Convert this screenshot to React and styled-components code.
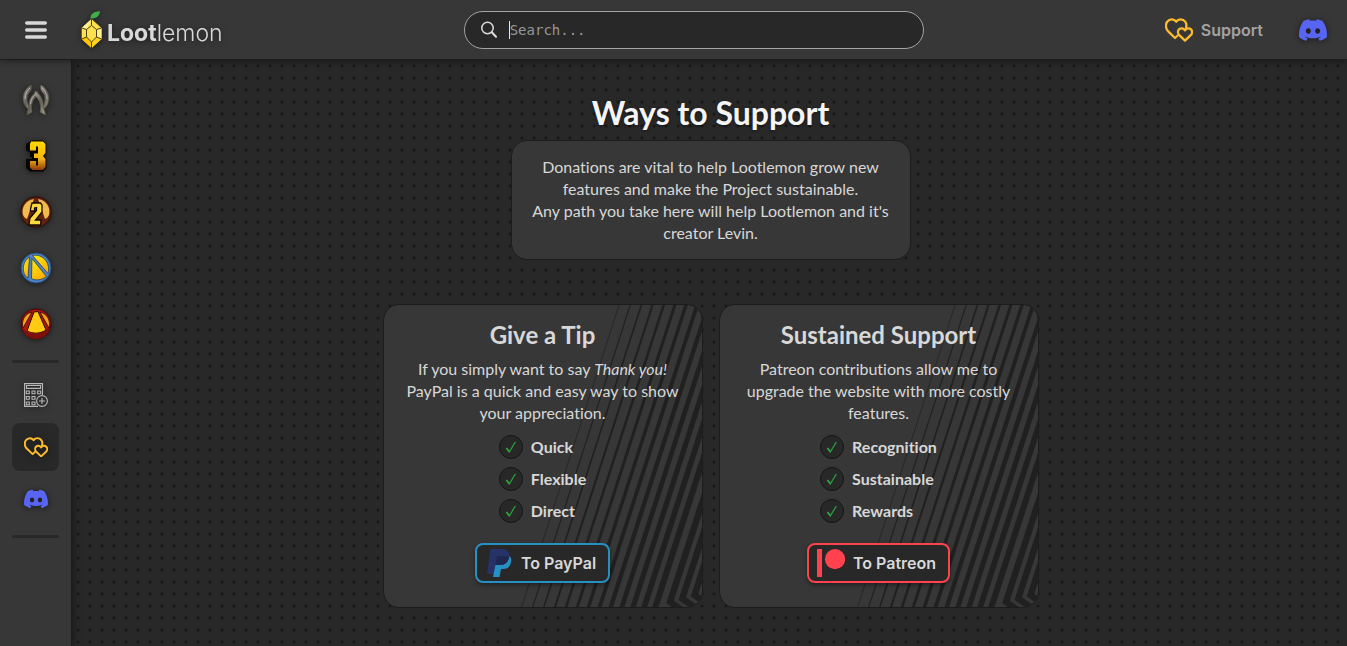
import React from "react";
import styled, { createGlobalStyle, ThemeProvider } from "styled-components";
import { SiDiscord } from "react-icons/si";

const theme = {
  bgColor: "#282828",
  panelColor: "#373737",
  lineColor: "#1c1c1c",
  textColor: "#d8d8d8",
  mutedColor: "#a3a3a3",
  yellow: "#fdbb2d",
  discord: "#5865f2",
  uiFont: `Inter, "Liberation Sans", sans-serif`,
};

const GlobalStyle = createGlobalStyle`
  * {
    box-sizing: border-box;
  }
  body {
    margin: 0;
    background-color: #282828;
    color: #d8d8d8;
    font-family: Lato, "Liberation Sans", sans-serif;
    font-size: 16px;
    font-variant-ligatures: none;
    line-height: 22px;
  }
  h1, h2, p, ul {
    margin: 0;
    padding: 0;
  }
  a {
    color: inherit;
    text-decoration: none;
  }
`;

const Page = styled.div`
  display: flex;
  flex-direction: column;
  min-height: 100vh;
`;

const Header = styled.header`
  display: flex;
  align-items: center;
  justify-content: space-between;
  height: 60px;
  padding: 0 20px 0 24px;
  background-color: ${(props) => props.theme.panelColor};
  border-bottom: 1px solid ${(props) => props.theme.lineColor};
  box-shadow: 0 0 8px rgba(0, 0, 0, 0.5);
  z-index: 2;
`;

const HeaderGroup = styled.div`
  display: flex;
  align-items: center;
  gap: ${(props) => props.$gap};
`;

const MenuButton = styled.button`
  display: flex;
  padding: 0;
  border: 0;
  background: none;
  cursor: pointer;
`;

const LogoLink = styled.a`
  display: flex;
  align-items: center;
  gap: 4px;
  filter: drop-shadow(0 1px 3px rgba(0, 0, 0, 0.5));
`;

const LogoText = styled.span`
  padding-top: 6px;
  font-family: ${(props) => props.theme.uiFont};
  font-size: 23px;
  font-weight: 300;
  line-height: 28px;
  b {
    font-weight: 700;
  }
`;

const SearchForm = styled.form`
  display: flex;
  align-items: center;
  flex: 0 1 460px;
  height: 38px;
  padding: 0 16px;
  background-color: ${(props) => props.theme.bgColor};
  border: 1px solid ${(props) => props.theme.mutedColor};
  border-radius: 19px;
`;

const Caret = styled.span`
  width: 1px;
  height: 18px;
  margin-left: 12px;
  background-color: #e8e8e8;
`;

const SearchInput = styled.input`
  flex: 1;
  min-width: 0;
  padding: 0;
  border: 0;
  outline: 0;
  background: none;
  color: ${(props) => props.theme.textColor};
  font-family: "DejaVu Sans Mono", monospace;
  font-size: 14px;
  &::placeholder {
    color: #979797;
    opacity: 1;
  }
`;

const SupportLink = styled.a`
  display: flex;
  align-items: center;
  gap: 8px;
  color: ${(props) => props.theme.mutedColor};
  font-family: ${(props) => props.theme.uiFont};
  font-weight: 600;
`;

const IconLink = styled.a`
  display: flex;
  color: ${(props) => props.theme.discord};
  filter: drop-shadow(0 1px 3px rgba(0, 0, 0, 0.5));
`;

const Body = styled.div`
  display: flex;
  flex: 1;
`;

const Sidebar = styled.nav`
  flex: none;
  width: 72px;
  padding: 16px 12px;
  background-color: ${(props) => props.theme.panelColor};
  border-right: 1px solid ${(props) => props.theme.lineColor};
  box-shadow: 0 0 8px rgba(0, 0, 0, 0.5);
`;

const SideList = styled.div`
  display: flex;
  flex-direction: column;
  gap: ${(props) => props.$gap};
`;

const SideLink = styled.a`
  display: flex;
  align-items: center;
  justify-content: center;
  height: 48px;
  border-radius: 8px;
  color: ${(props) => props.theme.discord};
  background-color: ${(props) => (props.$active ? props.theme.bgColor : "transparent")};
  svg {
    filter: drop-shadow(0 1px 3px rgba(0, 0, 0, 0.5));
  }
`;

const Divider = styled.hr`
  height: 3px;
  margin: 12px 0 8px;
  border: 0;
  border-radius: 2px;
  background-color: ${(props) => props.theme.bgColor};
`;

const Main = styled.main`
  display: flex;
  flex: 1;
  flex-direction: column;
  align-items: center;
  padding: 32px 16px 32px 18px;
  background-image: radial-gradient(circle, #191919 1px, transparent 2px);
  background-size: 12px 12px;
`;

const Title = styled.h1`
  margin-bottom: 6px;
  color: #f5f5f5;
  font-size: 32px;
  line-height: 42px;
  text-shadow: 0 1px 3px rgba(0, 0, 0, 0.5);
`;

const Intro = styled.p`
  width: 100%;
  max-width: 400px;
  margin-bottom: 44px;
  padding: 15px 20px;
  background-color: ${(props) => props.theme.panelColor};
  border: 1px solid ${(props) => props.theme.lineColor};
  border-radius: 16px;
  text-align: center;
`;

const CardRow = styled.div`
  display: flex;
  flex-wrap: wrap;
  justify-content: center;
  gap: 16px;
`;

const Card = styled.section`
  display: grid;
  width: 320px;
  overflow: hidden;
  background-color: ${(props) => props.theme.panelColor};
  border: 1px solid ${(props) => props.theme.lineColor};
  border-radius: 16px;
  > * {
    grid-area: 1 / 1;
  }
`;

const CardBody = styled.div`
  display: flex;
  flex-direction: column;
  align-items: center;
  padding: 16px 20px 24px;
  text-align: center;
`;

const CardTitle = styled.h2`
  margin-bottom: 9px;
  font-size: 24px;
  line-height: 28px;
`;

const PerkList = styled.ul`
  display: flex;
  flex-direction: column;
  gap: 8px;
  margin: 11px 0 20px;
  list-style: none;
`;

const Perk = styled.li`
  display: flex;
  align-items: center;
  gap: 8px;
  font-weight: 700;
`;

const Check = styled.span`
  display: flex;
  align-items: center;
  justify-content: center;
  width: 24px;
  height: 24px;
  background-color: ${(props) => props.theme.bgColor};
  border: 1px solid #151515;
  border-radius: 50%;
`;

const PayLink = styled.a`
  display: flex;
  align-items: center;
  gap: 8px;
  height: 40px;
  padding: 0 12px 0 8px;
  background-color: ${(props) => props.theme.bgColor};
  border: 2px solid ${(props) => props.$color};
  border-radius: 8px;
  box-shadow: 0 2px 4px rgba(0, 0, 0, 0.4);
  font-family: ${(props) => props.theme.uiFont};
  font-weight: 600;
`;

const MenuIcon = () => (
  <svg width="24" height="20" viewBox="0 0 24 20" stroke="#d8d8d8" strokeWidth="3.4" strokeLinecap="round">
    <path d="M2.7 3H21.3M2.7 10H21.3M2.7 17H21.3" />
  </svg>
);

const LemonIcon = () => (
  <svg width="22" height="38" viewBox="0 0 22 38">
    <path d="M9.5 7.5C9.5 2.5 13 .5 19 .2C18.500 5 15.500 7.600 9.500 7.500Z" fill="#3fae49" />
    <path d="M10.500 8L20.500 17V28L10.500 37L.7 28V17Z" fill="#ffe14d" />
    <path d="M10.500 8L5.500 18L.7 17Z" fill="#fff3a0" />
    <path d="M20.500 17V28L15.500 26V18Z" fill="#fff08a" />
    <path d="M.7 28L5.500 26L10.500 31V37Z" fill="#ffc400" />
    <path d="M20.500 28L15.500 26L10.500 31V37Z" fill="#ffd21f" />
    <path
      d="M10.500 14.500L15.500 18.500V26L10.500 31L5.500 26V18.500ZM10.500 8V14.500M15.500 18.500L20.500 17M15.500 26L20.500 28M10.500 31V37M5.500 26L.7 28M5.500 18.500L.7 17"
      fill="none"
      stroke="#4a4012"
      strokeWidth="1"
    />
  </svg>
);

const SearchIcon = () => (
  <svg width="16" height="18" viewBox="0 0 16 18" fill="none" stroke="#dedede" strokeLinecap="round">
    <circle cx="6.500" cy="7" r="5.700" strokeWidth="1.500" />
    <path d="M10.800 11.300L15 15.800" strokeWidth="2" />
  </svg>
);

const HeartsIcon = ({ width }) => (
  <svg width={width} height={(width * 6) / 7} viewBox="0 0 28 24" fill="none" stroke={theme.yellow} strokeWidth="2.3" strokeLinejoin="round" strokeLinecap="round">
    <path d="M12.700 17.500L10 20L3.200 13.400C.6 10.800 .2 6.500 2.200 3.800C4.600.7 8.900.5 11.200 3.700C13.400.5 18 .6 20.200 3.600C21.400 5.200 21.700 7.600 21 9.700" />
    <path d="M20 22.600L14.300 17.200C12.700 15.600 12.500 12.900 14 11.400C15.700 9.700 18.500 9.900 20 12.300C21.500 9.900 24.300 9.700 26 11.400C27.500 12.900 27.300 15.600 25.700 17.200Z" />
  </svg>
);

const CalculatorIcon = () => (
  <svg width="24" height="24" viewBox="0 0 24 24" fill="none" stroke="#b8b8b8" strokeWidth="1.100">
    <path d="M18.500 12V.6H.6V23.400H14M2.500 2.500H16.600V5.400H2.500Z" />
    <path d="M2.300 8H5.300V10.800H2.300ZM8 8H11V10.800H8ZM13.700 8H16.700V10.800H13.700ZM2.300 13.500H5.300V16.300H2.300ZM8 13.500H11V16.300H8ZM2.300 19H5.300V21.800H2.300ZM8 19H11V21.800H8Z" />
    <circle cx="18" cy="18" r="5.400" />
    <path d="M18 15V21M15 18H21" />
  </svg>
);

const HornsIcon = () => (
  <svg width="28" height="32" viewBox="0 0 28 32">
    <defs>
      <linearGradient id="steel" x1="0" y1="0" x2="1" y2="1">
        <stop offset="0" stopColor="#a39e99" />
        <stop offset=".5" stopColor="#66615f" />
        <stop offset="1" stopColor="#aaa39e" />
      </linearGradient>
    </defs>
    <g fill="url(#steel)" stroke="#5b5941" strokeWidth=".7">
      <path d="M9 1C4 4 1 9 1.200 15C1.400 19.500 3.500 23 6.500 25L5 28.500L9 27C5 20 4 14 6.200 10C7.500 8 10.500 6 9 1Z" />
      <path d="M19 1C24 4 27 9 26.800 15C26.600 19.500 24.500 23 21.500 25L23 28.500L19 27C23 20 24 14 21.800 10C20.500 8 17.500 6 19 1Z" />
      <path d="M15.500 7C9 11 6.500 17 7 22L5 31L10 28C8.500 22 10 16 15 12Z" />
      <path d="M13 7C19.500 11 21.500 17 21 22L23.500 31L18 28C19.500 22 18 16 12.500 11Z" />
    </g>
    <path d="M3 15C3.200 10 5 6 8 4M25 15C24.800 10 23 6 20 4M8.500 20C9 15 11 12 14 10" fill="none" stroke="#c4bfba" strokeWidth=".8" />
  </svg>
);

const ThreeIcon = () => (
  <svg width="22" height="32" viewBox="0 0 22 32">
    <defs>
      <linearGradient id="gold" x1="0" y1="0" x2="0" y2="1">
        <stop offset="0" stopColor="#ffd900" />
        <stop offset=".6" stopColor="#f5b414" />
        <stop offset="1" stopColor="#8d3a0c" />
      </linearGradient>
    </defs>
    <path d="M4 2L7 .5H18L21.500 4V13L19.500 16L21.500 19V28L18 31.500H5L1 28V19H7V17H5V12L1 11V4Z" fill="#080503" />
    <path d="M6 1.500H18L20.500 4V13L18 16L20.500 19V27L18 30H7.500L5 27.500V21H11V25.500H13V18H9V13.500H13V6.500H11V10.500H5V4Z" fill="url(#gold)" />
  </svg>
);

const TwoIcon = () => (
  <svg width="32" height="32" viewBox="0 0 32 32">
    <circle cx="16" cy="16" r="15.300" fill="#61230e" stroke="#2a0d07" />
    <path d="M3 19C1 11 6 4 14 3L7 23C5 22 4 21 3 19ZM18 3C26 4 31 11 29 19C28 21 27 22 25 23Z" fill="#f1bb4b" />
    <path d="M10.500 13L12 7H20.500L22 9V16L15.500 24H21L20.500 29H9L10 22L16.500 14.500V11.500L14.500 12V15H10.500Z" fill="#ffda3f" stroke="#160b04" strokeWidth="1.300" />
  </svg>
);

const PreSequelIcon = () => (
  <svg width="32" height="32" viewBox="0 0 32 32">
    <defs>
      <linearGradient id="sun" x1="0" y1="0" x2=".6" y2="1">
        <stop offset="0" stopColor="#fff000" />
        <stop offset="1" stopColor="#ffae0c" />
      </linearGradient>
    </defs>
    <circle cx="16" cy="16" r="15" fill="#4e83c5" stroke="#244f83" />
    <path d="M9.500 5C3 9 1.500 18 5.500 24L8 26Z" fill="url(#sun)" stroke="#263c50" strokeWidth=".8" />
    <path d="M12 6.500L26.500 24.500C22 28 16 29 11.500 26.500Z" fill="url(#sun)" stroke="#263c50" strokeWidth=".8" />
    <path d="M12.500 3.500C22 1.500 31 10 28 21.500Z" fill="url(#sun)" stroke="#263c50" strokeWidth=".8" />
  </svg>
);

const VaultIcon = () => (
  <svg width="32" height="32" viewBox="0 0 32 32">
    <circle cx="16" cy="16" r="15" fill="#ad1712" stroke="#420807" />
    <path d="M2 19C7 28 23 30 30 17C30 25 24 31 16 31C8 31 3 26 2 19Z" fill="#7b100d" />
    <path d="M12 4C5 6 1 12 3 20ZM20 4C27 6 31 12 29 20Z" fill="#f2a51b" stroke="#310705" strokeWidth=".8" />
    <path d="M14 4L18 3.500L26 22C20 26 13 26 7 23Z" fill="#ffc914" stroke="#310705" strokeWidth="1" />
  </svg>
);

const CheckIcon = () => (
  <svg width="12" height="14" viewBox="0 0 12 14" fill="none" stroke="#2ba83a">
    <path d="M1.500 8.300L4.300 12L10.300 2" strokeWidth="1.200" />
    <path d="M1.500 7.900L4.300 11.500" strokeWidth="1.500" />
  </svg>
);

const PaypalIcon = () => (
  <svg width="28" height="28" viewBox="0 0 28 28">
    <path d="M5.500 0H17C22 0 25 3 24.200 8C23.300 13.500 20 16 15 16H11L9 25H2Z" fill="#253368" />
    <path d="M24.300 7C27 9 26.500 12 25.500 15C24.300 18.500 21.500 20 18 20H16L14.500 28H8L10.500 16H15C20 16 23.500 13 24.300 7Z" fill="#2790c3" />
    <path d="M12 7H21C22.500 7 23.500 7 24.300 8C23.300 13 20 16 15 16H10.300Z" fill="#1f264f" />
  </svg>
);

const PatreonIcon = () => (
  <svg width="28" height="28" viewBox="0 0 28 28" fill="#ff424d">
    <rect width="5" height="28" />
    <circle cx="18" cy="10.200" r="10.100" />
  </svg>
);

// slanted bars that get wider to the right, the last ones fold back at the bottom
const Stripes = () => (
  <svg width="100%" height="100%" viewBox="0 0 318 302" preserveAspectRatio="xMaxYMax slice" fill="none" stroke="#202020">
    {Array.from({ length: 23 }, (_, i) => {
      const x = 235 + i * 11.15;
      const w = Math.min(0.7 + i * 0.45, 6.4);
      if (i < 13) {
        return <path key={i} d={`M${x + 3} -9L${x - 100} 310`} strokeWidth={w} />;
      }
      const ey = 297 - (i - 13) * 3.4;
      const ex = x + 2 - ey * 0.323;
      return <path key={i} d={`M${x + 5} -9L${ex} ${ey}L${ex + 26} ${ey + 18}`} strokeWidth={w} />;
    })}
  </svg>
);

const games = [
  { name: "Wonderlands", Icon: HornsIcon },
  { name: "Borderlands 3", Icon: ThreeIcon },
  { name: "Borderlands 2", Icon: TwoIcon },
  { name: "The Pre-Sequel", Icon: PreSequelIcon },
  { name: "Borderlands", Icon: VaultIcon },
];

const SupportCard = ({ title, text, perks, color, Icon, label }) => (
  <Card>
    <Stripes />
    <CardBody>
      <CardTitle>{title}</CardTitle>
      <p>{text}</p>
      <PerkList>
        {perks.map((perk) => (
          <Perk key={perk}>
            <Check>
              <CheckIcon />
            </Check>
            {perk}
          </Perk>
        ))}
      </PerkList>
      <PayLink href="#" $color={color}>
        <Icon />
        {label}
      </PayLink>
    </CardBody>
  </Card>
);

export default function App() {
  return (
    <ThemeProvider theme={theme}>
      <GlobalStyle />
      <Page>
        <Header>
          <HeaderGroup $gap="33px">
            <MenuButton type="button" aria-label="Menu">
              <MenuIcon />
            </MenuButton>
            <LogoLink href="#">
              <LemonIcon />
              <LogoText>
                <b>Loot</b>lemon
              </LogoText>
            </LogoLink>
          </HeaderGroup>
          <SearchForm role="search" onSubmit={(e) => e.preventDefault()}>
            <SearchIcon />
            <Caret />
            <SearchInput type="text" aria-label="Search" placeholder="Search..." />
          </SearchForm>
          <HeaderGroup $gap="36px">
            <SupportLink href="#">
              <HeartsIcon width={28} />
              Support
            </SupportLink>
            <IconLink href="#" aria-label="Discord">
              <SiDiscord size={28} />
            </IconLink>
          </HeaderGroup>
        </Header>
        <Body>
          <Sidebar>
            <SideList $gap="8px">
              {games.map(({ name, Icon }) => (
                <SideLink key={name} href="#" aria-label={name}>
                  <Icon />
                </SideLink>
              ))}
            </SideList>
            <Divider />
            <SideList $gap="4px">
              <SideLink href="#" aria-label="Calculator">
                <CalculatorIcon />
              </SideLink>
              <SideLink href="#" aria-label="Support" $active>
                <HeartsIcon width={24} />
              </SideLink>
              <SideLink href="#" aria-label="Discord">
                <SiDiscord size={24} />
              </SideLink>
            </SideList>
            <Divider />
          </Sidebar>
          <Main>
            <Title>Ways to Support</Title>
            <Intro>
              Donations are vital to help Lootlemon grow new features and make the Project sustainable.
              <br />
              Any path you take here will help Lootlemon and it's creator Levin.
            </Intro>
            <CardRow>
              <SupportCard
                title="Give a Tip"
                text={
                  <>
                    If you simply want to say <em>Thank you!</em> PayPal is a quick and easy way to show your appreciation.
                  </>
                }
                perks={["Quick", "Flexible", "Direct"]}
                color="#2790c3"
                Icon={PaypalIcon}
                label="To PayPal"
              />
              <SupportCard
                title="Sustained Support"
                text="Patreon contributions allow me to upgrade the website with more costly features."
                perks={["Recognition", "Sustainable", "Rewards"]}
                color="#ff424d"
                Icon={PatreonIcon}
                label="To Patreon"
              />
            </CardRow>
          </Main>
        </Body>
      </Page>
    </ThemeProvider>
  );
}
